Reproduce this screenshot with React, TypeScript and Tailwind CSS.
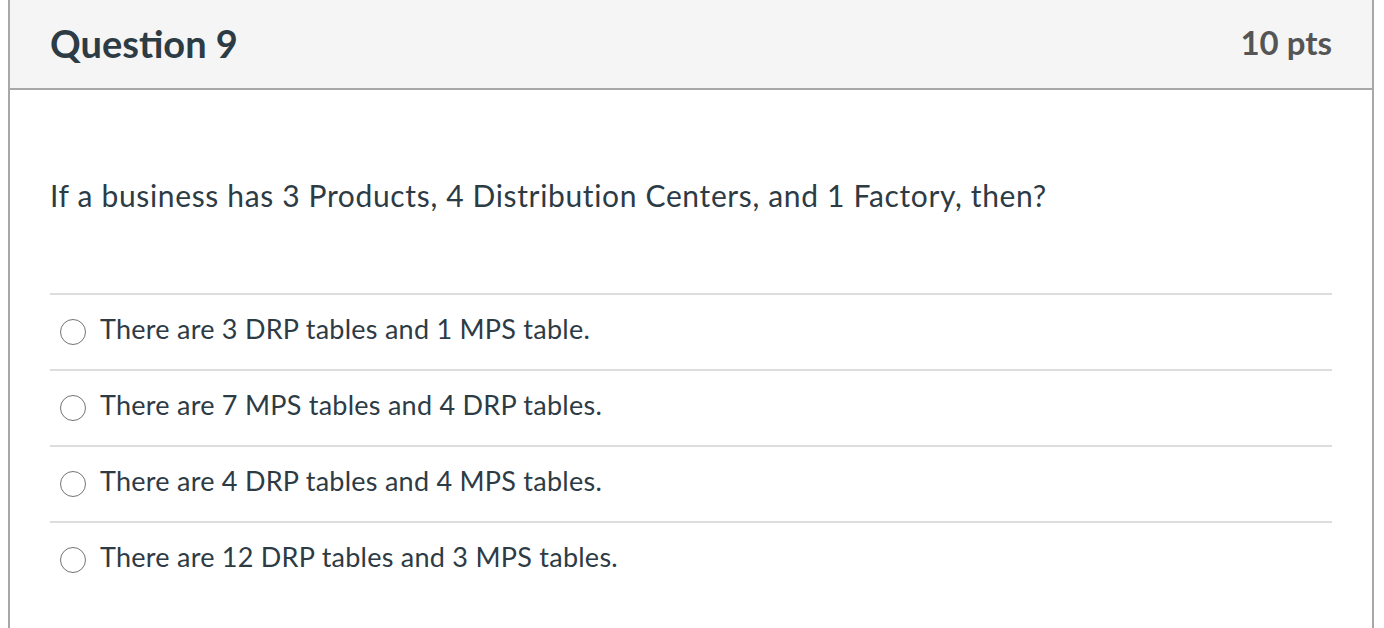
import React from "react";

const options = [
  "There are 3 DRP tables and 1 MPS table.",
  "There are 7 MPS tables and 4 DRP tables.",
  "There are 4 DRP tables and 4 MPS tables.",
  "There are 12 DRP tables and 3 MPS tables.",
];

export default function App() {
  return (
    <div className="w-[1384px] h-[628px] overflow-hidden bg-white" style={{ fontFamily: "Lato, 'Noto Sans', sans-serif" }}>
      <div className="ml-[8px] w-[1366px] h-[700px] border-x-2 border-[#a8a8a8]">
        <div className="h-[90px] bg-[#f5f5f5] border-b-2 border-[#a8a8a8] flex items-center justify-between pl-[40px] pr-[40px]">
          <div className="text-[38px] font-bold text-[#2d3b45] pb-[1px]">Question 9</div>
          <div className="text-[33px] font-bold text-[#555555] pb-[2px]">10 pts</div>
        </div>
        <div className="pl-[40px] pr-[40px] text-[#2d3b45]">
          <div className="h-[203px] flex items-center text-[30px] tracking-[0.65px] pt-[7px]">
            If a business has 3 Products, 4 Distribution Centers, and 1 Factory, then?
          </div>
          <div>
            {options.map((o) => (
              <div key={o} className="h-[76px] border-t-2 border-[#dddddd] flex items-center pl-[10px] text-[27px] tracking-[0.25px]">
                <span className="w-[26px] h-[26px] rounded-full border-[1.5px] border-[#737373] bg-white mr-[14px] shrink-0" />
                <span className="pb-[5px]">{o}</span>
              </div>
            ))}
          </div>
        </div>
      </div>
    </div>
  );
}
